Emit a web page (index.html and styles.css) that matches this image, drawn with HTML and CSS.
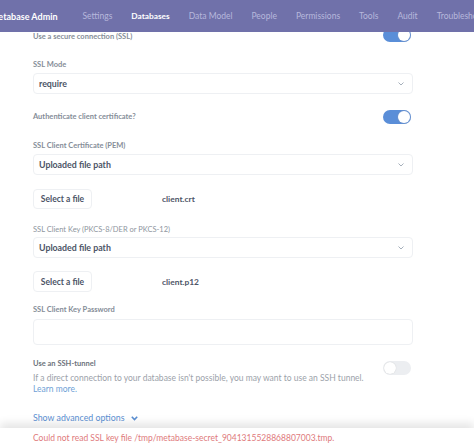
FILE: index.html
```html
<!DOCTYPE html>
<html>
<head>
  <title>Metabase Admin - Databases</title>
  <link rel="stylesheet" href="styles.css">
</head>
<body>
  <div class="page">
    <nav class="nav">
      <span class="brand">Metabase Admin</span>
      <span class="nav-item">Settings</span>
      <span class="nav-item active">Databases</span>
      <span class="nav-item">Data Model</span>
      <span class="nav-item">People</span>
      <span class="nav-item">Permissions</span>
      <span class="nav-item">Tools</span>
      <span class="nav-item">Audit</span>
      <span class="nav-item">Troubleshooting</span>
    </nav>

    <div class="form">
      <div class="toggle-row first">
        <span class="label">Use a secure connection (SSL)</span>
        <span class="toggle on"></span>
      </div>

      <div class="field mode">
        <span class="label">SSL Mode</span>
        <div class="select">
          <span>require</span>
          <svg class="chevron" width="6" height="4" viewBox="0 0 6 4"><polyline points="0.5,0.5 3,3 5.5,0.5" fill="none" stroke="#a5afbb" stroke-width="1"/></svg>
        </div>
      </div>

      <div class="toggle-row auth">
        <span class="label">Authenticate client certificate?</span>
        <span class="toggle on"></span>
      </div>

      <div class="field cert">
        <span class="label">SSL Client Certificate (PEM)</span>
        <div class="select">
          <span>Uploaded file path</span>
          <svg class="chevron" width="6" height="4" viewBox="0 0 6 4"><polyline points="0.5,0.5 3,3 5.5,0.5" fill="none" stroke="#a5afbb" stroke-width="1"/></svg>
        </div>
      </div>

      <div class="file-row cert-file">
        <span class="file-button">Select a file</span>
        <span class="file-name">client.crt</span>
      </div>

      <div class="field key">
        <span class="label light">SSL Client Key (PKCS-8/DER or PKCS-12)</span>
        <div class="select">
          <span>Uploaded file path</span>
          <svg class="chevron" width="6" height="4" viewBox="0 0 6 4"><polyline points="0.5,0.5 3,3 5.5,0.5" fill="none" stroke="#a5afbb" stroke-width="1"/></svg>
        </div>
      </div>

      <div class="file-row key-file">
        <span class="file-button">Select a file</span>
        <span class="file-name">client.p12</span>
      </div>

      <div class="field password">
        <span class="label">SSL Client Key Password</span>
        <div class="input"></div>
      </div>

      <div class="ssh">
        <div class="ssh-text">
          <span class="label dark">Use an SSH-tunnel</span>
          <p class="desc">If a direct connection to your database isn't possible, you may want to use an SSH tunnel.<br><span class="link">Learn more.</span></p>
        </div>
        <span class="toggle"></span>
      </div>

      <div class="advanced">
        Show advanced options
        <svg width="7" height="5" viewBox="0 0 7 5"><polyline points="0.8,0.8 3.5,3.6 6.2,0.8" fill="none" stroke="#5b8fd2" stroke-width="1.6"/></svg>
      </div>
    </div>

    <div class="footer">
      Could not read SSL key file /tmp/metabase-secret_9041315528868807003.tmp.
    </div>
  </div>
</body>
</html>
```

FILE: styles.css
```css
body {
  margin: 0;
  font-family: Lato, "Open Sans", sans-serif;
  background: #fff;
  overflow: hidden;
}

.page {
  height: 448px;
  display: flex;
  flex-direction: column;
  overflow: hidden;
}

.nav {
  position: relative;
  z-index: 2;
  height: 32px;
  flex-shrink: 0;
  background: #7071aa;
  display: flex;
  align-items: center;
  gap: 19px;
  white-space: nowrap;
  font-size: 8.5px;
}

.brand {
  margin-left: -10px;
  margin-right: 6px;
  color: #fff;
  font-weight: 700;
  font-size: 9px;
}

.nav-item {
  color: #b7b8dc;
}

.nav-item.active {
  color: #fff;
  font-weight: 700;
  font-size: 8.3px;
}

.form {
  width: 380px;
  margin-left: 33px;
  display: flex;
  flex-direction: column;
}

.label {
  display: block;
  font-size: 7.5px;
  line-height: 10px;
  font-weight: 700;
  color: #858d98;
  white-space: nowrap;
}

.label.light {
  font-weight: 400;
  color: #8e959e;
}

.label.dark {
  color: #6d747c;
}

.toggle-row {
  height: 14px;
  display: flex;
  align-items: flex-end;
  justify-content: space-between;
}

.toggle-row .label {
  align-self: center;
}

.toggle-row.first {
  margin-top: -4px;
  align-items: flex-start;
}

.toggle-row.first .label {
  align-self: flex-end;
}

.toggle {
  width: 28px;
  height: 14px;
  border-radius: 7px;
  background: #eceef1;
  position: relative;
  margin-right: 2px;
  flex-shrink: 0;
}

.toggle::after {
  content: "";
  position: absolute;
  top: 1px;
  left: 1px;
  width: 12px;
  height: 12px;
  border-radius: 50%;
  background: #fff;
  box-shadow: 0 0 1px rgba(0, 0, 0, 0.2);
}

.toggle.on {
  background: #5a8ed8;
}

.toggle.on::after {
  left: 15px;
  box-shadow: 0 0 0 1px rgba(120, 150, 200, 0.5);
}

.field {
  display: flex;
  flex-direction: column;
  gap: 3px;
}

.field.mode { margin-top: 18px; }
.toggle-row.auth { margin-top: 16px; }
.field.cert { margin-top: 17px; }
.field.key { margin-top: 16px; gap: 2px; }
.field.password { margin-top: 13px; gap: 4px; }

.select {
  height: 21px;
  box-sizing: border-box;
  border: 1px solid #eef0f3;
  border-radius: 4px;
  display: flex;
  align-items: center;
  justify-content: space-between;
  padding: 0 8px 0 5px;
  font-size: 8.8px;
  font-weight: 700;
  color: #4c5466;
}

.chevron {
  display: block;
}

.input {
  height: 26px;
  box-sizing: border-box;
  border: 1px solid #eef0f3;
  border-radius: 4px;
}

.file-row {
  display: flex;
  align-items: center;
}

.cert-file { margin-top: 14px; }
.key-file { margin-top: 13px; }

.file-button {
  width: 59px;
  height: 20px;
  box-sizing: border-box;
  border: 1px solid #eef0f3;
  border-radius: 4px;
  display: flex;
  align-items: center;
  justify-content: center;
  font-size: 8.5px;
  font-weight: 700;
  color: #4c5466;
}

.key-file .file-button {
  height: 21px;
}

.file-name {
  margin-left: 70px;
  font-size: 8.4px;
  font-weight: 700;
  color: #4c5466;
}

.ssh {
  margin-top: 14px;
  display: flex;
  justify-content: space-between;
  align-items: flex-start;
}

.ssh .toggle {
  margin-top: 2px;
}

.desc {
  margin: 4px 0 0;
  font-size: 8.5px;
  line-height: 10.5px;
  color: #9ca2aa;
}

.link {
  color: #6f9fd6;
}

.advanced {
  margin-top: 19px;
  display: flex;
  align-items: center;
  gap: 7px;
  font-size: 8.8px;
  line-height: 10px;
  font-weight: 400;
  color: #5b8fd2;
}

.footer {
  margin-top: auto;
  height: 20px;
  flex-shrink: 0;
  background: #fff;
  box-shadow: 0 -5px 8px rgba(0, 0, 0, 0.1);
  padding-left: 33px;
  display: flex;
  align-items: center;
  font-size: 8.5px;
  color: #e07a7c;
  white-space: nowrap;
}
```
